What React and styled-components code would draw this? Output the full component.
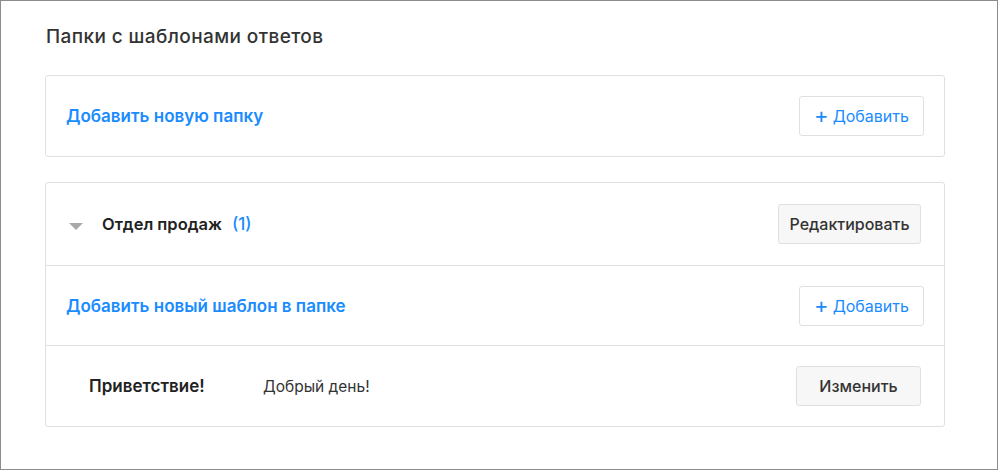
import React from "react";
import styled, { createGlobalStyle } from "styled-components";

const Global = createGlobalStyle`
  html, body { margin: 0; padding: 0; background: #fff; }
  body { font-family: Inter, "Noto Sans", sans-serif; color: #333; }
  * { box-sizing: border-box; }
`;

const Frame = styled.div`
  width: 998px;
  height: 470px;
  border: 1px solid #8c8c8c;
  padding: 22px 52px 0 44px;
`;

const Title = styled.h1`
  margin: 0 0 24px 1px;
  font-size: 19px;
  font-weight: 500;
  line-height: 28px;
  color: #333;
  letter-spacing: 0.4px;
`;

const Card = styled.div`
  width: 900px;
  border: 1px solid #e0e0e0;
  border-radius: 3px;
  background: #fff;
  & + & { margin-top: 25px; }
`;

const Row = styled.div`
  display: flex;
  align-items: center;
  height: ${(p) => p.$h || 80}px;
  padding: 0 ${(p) => p.$pr || 20}px 0 ${(p) => p.$pl || 20}px;
  & + & { border-top: 1px solid #e0e0e0; }
`;

const LinkText = styled.span`
  color: #1a8cff;
  font-size: 17px;
  font-weight: 600;
  flex: 1;
`;

const Caret = styled.span`
  width: 0;
  height: 0;
  border-left: 7px solid transparent;
  border-right: 7px solid transparent;
  border-top: 7px solid #aaa;
  margin: 4px 19px 0 3px;
`;

const FolderName = styled.span`
  font-size: 16.5px;
  font-weight: 600;
  color: #222;
`;

const Count = styled.span`
  color: #1a8cff;
  font-size: 17px;
  font-weight: 500;
  margin-left: 10px;
  flex: 1;
`;

const TemplateName = styled.span`
  font-size: 17px;
  font-weight: 600;
  color: #222;
  width: 174px;
`;

const TemplateText = styled.span`
  font-size: 15.5px;
  color: #333;
  flex: 1;
`;

const Button = styled.button`
  height: 40px;
  width: ${(p) => p.$w}px;
  border: 1px solid #e0e0e0;
  border-radius: 3px;
  background: ${(p) => (p.$primary ? "#fff" : "#f7f7f7")};
  color: ${(p) => (p.$primary ? "#1a8cff" : "#333")};
  font-family: inherit;
  font-size: 16px;
  font-weight: ${(p) => (p.$primary ? 400 : 500)};
  display: flex;
  align-items: center;
  justify-content: center;
  gap: 4px;
  padding: 0;
  cursor: pointer;
`;

const Plus = styled.span`
  font-size: 22px;
  line-height: 1;
  margin-top: -2px;
`;

export default function App() {
  return (
    <>
      <Global />
      <Frame>
        <Title>Папки с шаблонами ответов</Title>
        <Card>
          <Row>
            <LinkText>Добавить новую папку</LinkText>
            <Button $primary $w={125}>
              <Plus>+</Plus>Добавить
            </Button>
          </Row>
        </Card>
        <Card>
          <Row $pr={23} $h={82}>
            <Caret />
            <FolderName>Отдел продаж</FolderName>
            <Count>(1)</Count>
            <Button $w={143}>Редактировать</Button>
          </Row>
          <Row $h={80}>
            <LinkText>Добавить новый шаблон в папке</LinkText>
            <Button $primary $w={125}>
              <Plus>+</Plus>Добавить
            </Button>
          </Row>
          <Row $pr={23} $pl={43} $h={81}>
            <TemplateName>Приветствие!</TemplateName>
            <TemplateText>Добрый день!</TemplateText>
            <Button $w={125}>Изменить</Button>
          </Row>
        </Card>
      </Frame>
    </>
  );
}
